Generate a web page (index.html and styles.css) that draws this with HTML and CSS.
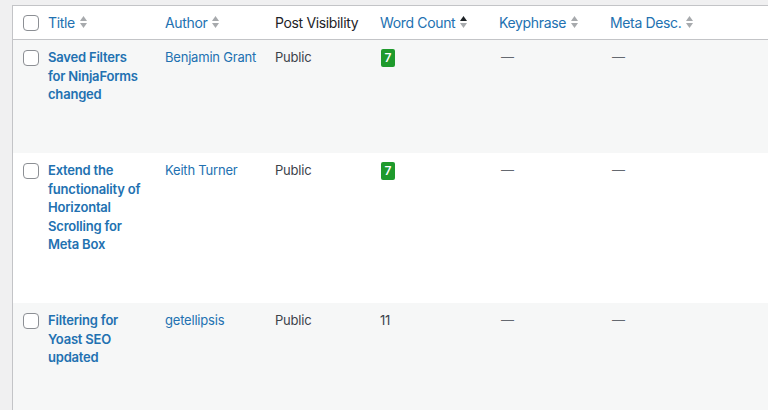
FILE: index.html
```html
<!DOCTYPE html>
<html lang="en">
<head>
<meta charset="utf-8">
<title>Posts</title>
<link rel="stylesheet" href="styles.css">
</head>
<body>
<div class="wrap">
  <table class="list">
    <colgroup>
      <col class="c-check">
      <col class="c-title">
      <col class="c-author">
      <col class="c-vis">
      <col class="c-words">
      <col class="c-key">
      <col class="c-meta">
    </colgroup>
    <thead>
      <tr>
        <td class="check"><span class="cb"></span></td>
        <th><a class="sort">Title <svg class="arrows" viewBox="0 0 7 12" width="7" height="12"><polygon class="up" points="0,5 3.5,0 7,5"/><polygon class="down" points="0,7 3.5,12 7,7"/></svg></a></th>
        <th><a class="sort">Author <svg class="arrows" viewBox="0 0 7 12" width="7" height="12"><polygon class="up" points="0,5 3.5,0 7,5"/><polygon class="down" points="0,7 3.5,12 7,7"/></svg></a></th>
        <th class="plain">Post Visibility</th>
        <th><a class="sort">Word Count <svg class="arrows active" viewBox="0 0 7 12" width="7" height="12"><polygon class="up" points="0,5 3.5,0 7,5"/><polygon class="down" points="0,7 3.5,12 7,7"/></svg></a></th>
        <th><a class="sort">Keyphrase <svg class="arrows" viewBox="0 0 7 12" width="7" height="12"><polygon class="up" points="0,5 3.5,0 7,5"/><polygon class="down" points="0,7 3.5,12 7,7"/></svg></a></th>
        <th><a class="sort">Meta Desc. <svg class="arrows" viewBox="0 0 7 12" width="7" height="12"><polygon class="up" points="0,5 3.5,0 7,5"/><polygon class="down" points="0,7 3.5,12 7,7"/></svg></a></th>
      </tr>
    </thead>
    <tbody>
      <tr class="alt">
        <td class="check"><span class="cb"></span></td>
        <td class="title"><a>Saved Filters for NinjaForms changed</a></td>
        <td><a class="author">Benjamin Grant</a></td>
        <td>Public</td>
        <td><span class="badge">7</span></td>
        <td class="dash">—</td>
        <td class="dash">—</td>
      </tr>
      <tr>
        <td class="check"><span class="cb"></span></td>
        <td class="title"><a>Extend the functionality of Horizontal Scrolling for Meta Box</a></td>
        <td><a class="author">Keith Turner</a></td>
        <td>Public</td>
        <td><span class="badge">7</span></td>
        <td class="dash">—</td>
        <td class="dash">—</td>
      </tr>
      <tr class="alt">
        <td class="check"><span class="cb"></span></td>
        <td class="title"><a>Filtering for Yoast SEO updated</a></td>
        <td><a class="author">getellipsis</a></td>
        <td>Public</td>
        <td>11</td>
        <td class="dash">—</td>
        <td class="dash">—</td>
      </tr>
    </tbody>
  </table>
</div>
</body>
</html>
```

FILE: styles.css
```css
html, body {
  margin: 0;
  padding: 0;
  background: #f0f0f1;
  overflow: hidden;
  height: 410px;
}
body {
  font-family: Inter, "Liberation Sans", sans-serif;
  color: #3c434a;
  font-size: 13px;
}
.wrap {
  margin: 5px 0 0 12px;
  border-top: 1px solid #c3c4c7;
  border-left: 1px solid #c3c4c7;
  background: #fff;
}
.list {
  border-collapse: collapse;
  table-layout: fixed;
  width: 100%;
}
.c-check { width: 27px; }
.c-title { width: 115px; }
.c-author { width: 110px; }
.c-vis { width: 105px; }
.c-words { width: 119px; }
.c-key { width: 111px; }

thead th, thead td {
  text-align: left;
  font-weight: 400;
  font-size: 14px;
  letter-spacing: -0.35px;
  line-height: 17px;
  padding: 8px 10px;
  border-bottom: 1px solid #c3c4c7;
  white-space: nowrap;
  vertical-align: middle;
}
thead th.plain { color: #1d2327; }
.sort {
  color: #2271b1;
  display: inline-flex;
  align-items: center;
  gap: 5px;
}
.arrows { display: block; margin-top: -2px; }
.arrows polygon { fill: #a7aaad; }
.arrows.active .up { fill: #1d2327; }

tbody td {
  padding: 8px 10px;
  line-height: 18.5px;
  letter-spacing: -0.2px;
  vertical-align: top;
}
tbody tr.alt { background: #f6f7f7; }
tbody td.title {
  padding: 8px 10px 49.5px 8px;
}
thead th:nth-child(2) { padding-left: 8px; }
.title a {
  color: #2271b1;
  font-weight: 600;
}
.author { color: #2271b1; white-space: nowrap; }
.dash { color: #646970; padding-left: 12px; }

td.check { padding: 10px 0 0 10px; }
thead td.check { padding: 8px 0 7px 10px; }
.cb {
  display: block;
  width: 14px;
  height: 14px;
  border: 1px solid #8c8f94;
  border-radius: 4px;
  background: #fff;
}
.badge {
  display: inline-block;
  width: 14px;
  height: 18px;
  line-height: 18px;
  text-align: center;
  background: #1e9a2c;
  color: #fff;
  border-radius: 2px;
  font-size: 12px;
  font-weight: 600;
  letter-spacing: 0;
  margin-left: 1px;
}
```
